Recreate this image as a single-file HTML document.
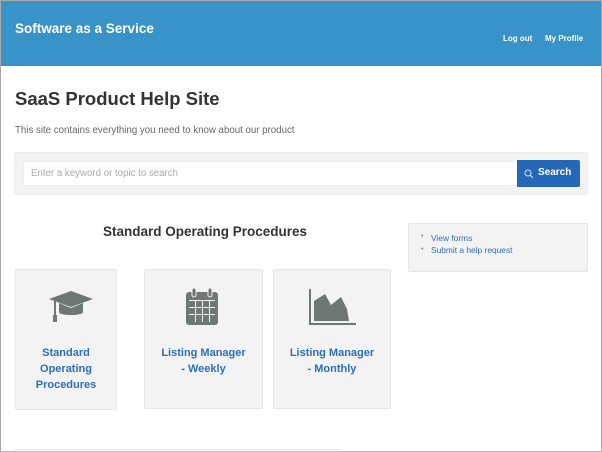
<!DOCTYPE html>
<html><head><style>
*{margin:0;padding:0;box-sizing:border-box}
body{width:602px;height:452px;overflow:hidden;font-family:"Liberation Sans",Arial,sans-serif;background:#fff;position:relative}
.frame{position:absolute;left:0;top:0;width:602px;height:452px;border:1px solid #a9a9a9;border-bottom-color:#bbb}
.hdr{position:absolute;left:1px;top:1px;width:600px;height:65px;background:#3893c9}
.a{position:absolute;white-space:nowrap}
.card{position:absolute;background:#f3f3f3;border:1px solid #e6e6e6;border-radius:2px}
.ct{position:absolute;left:0;right:0;text-align:center;color:#2a6fba;font-weight:bold;font-size:11px;line-height:16px}
</style></head><body>
<div class="hdr"></div>
<div class="a" style="left:15px;top:21px;color:#fff;font-weight:bold;font-size:13.5px">Software as a Service</div>
<div class="a" style="left:503px;top:34px;color:#fff;font-size:8px;font-weight:bold">Log out</div>
<div class="a" style="left:545px;top:34px;color:#fff;font-size:8px;font-weight:bold">My Profile</div>
<div class="a" style="left:15px;top:88px;color:#333;font-weight:bold;font-size:18.5px">SaaS Product Help Site</div>
<div class="a" style="left:15px;top:125px;color:#666;font-size:9.7px">This site contains everything you need to know about our product</div>
<div style="position:absolute;left:14px;top:152px;width:574px;height:43px;background:#f3f3f3;border:1px solid #ececec;border-radius:2px"></div>
<div style="position:absolute;left:23px;top:161px;width:495px;height:25px;background:#fff;border:1px solid #eee;border-radius:2px 0 0 2px"></div>
<div class="a" style="left:31px;top:168px;color:#aaa;font-size:9.7px">Enter a keyword or topic to search</div>
<div style="position:absolute;left:517px;top:160px;width:63px;height:27px;background:#2668b8;border-radius:0 2px 2px 0"></div>
<svg style="position:absolute;left:524px;top:169px" width="10" height="10" viewBox="0 0 10 10"><circle cx="4" cy="4" r="3" fill="none" stroke="#cfe0f3" stroke-width="1"/><path d="M6.2 6.2L9 9" stroke="#cfe0f3" stroke-width="1.2"/></svg>
<div class="a" style="left:538px;top:167px;color:#fff;font-weight:bold;font-size:10px">Search</div>
<div class="a" style="left:103px;top:224px;color:#333;font-weight:bold;font-size:13.5px">Standard Operating Procedures</div>
<div class="card" style="left:408px;top:223px;width:180px;height:49px"></div>
<div class="a" style="left:421px;top:233px;color:#888;font-size:7px">•</div>
<div class="a" style="left:421px;top:246px;color:#888;font-size:7px">•</div>
<div class="a" style="left:431px;top:233px;color:#2a6fba;font-size:8.4px">View forms</div>
<div class="a" style="left:431px;top:245px;color:#2a6fba;font-size:8.4px">Submit a help request</div>
<div class="card" style="left:15px;top:269px;width:102px;height:141px">
<svg style="position:absolute;left:33px;top:19px" width="46" height="34" viewBox="0 0 46 34"><path d="M0 10L22 2L44 10L22 18Z" fill="#6f7775"/><path d="M10 14V23C10 27 34 27 34 23V14L22 19Z" fill="#6f7775"/><path d="M6 12V28" stroke="#6f7775" stroke-width="2"/><rect x="4" y="26" width="4" height="7" fill="#6f7775"/></svg>
<div class="ct" style="top:75px">Standard<br>Operating<br>Procedures</div></div>
<div class="card" style="left:144px;top:269px;width:119px;height:140px">
<svg style="position:absolute;left:40px;top:18px" width="34" height="38" viewBox="0 0 34 38"><rect x="1" y="4" width="32" height="33" rx="3" fill="#6f7775"/><rect x="7" y="0" width="4" height="9" rx="2" fill="#6f7775" stroke="#f3f3f3" stroke-width="1"/><rect x="23" y="0" width="4" height="9" rx="2" fill="#6f7775" stroke="#f3f3f3" stroke-width="1"/><g fill="#f3f3f3"><rect x="4" y="12" width="26" height="1"/><rect x="4" y="19" width="26" height="1"/><rect x="4" y="26" width="26" height="1"/><rect x="10" y="12" width="1" height="22"/><rect x="17" y="12" width="1" height="22"/><rect x="24" y="12" width="1" height="22"/></g></svg>
<div class="ct" style="top:75px">Listing Manager<br>- Weekly</div></div>
<div class="card" style="left:273px;top:269px;width:118px;height:140px">
<svg style="position:absolute;left:35px;top:19px" width="48" height="38" viewBox="0 0 48 38"><path d="M1 0V35H47" fill="none" stroke="#6f7775" stroke-width="2"/><path d="M5 32V12L16 5L22 16L32 8L38 20L40 32Z" fill="#6f7775"/></svg>
<div class="ct" style="top:75px">Listing Manager<br>- Monthly</div></div>
<div style="position:absolute;left:14px;top:449px;width:326px;height:1px;background:#e4e4e4"></div>
<div class="frame"></div>
</body></html>
